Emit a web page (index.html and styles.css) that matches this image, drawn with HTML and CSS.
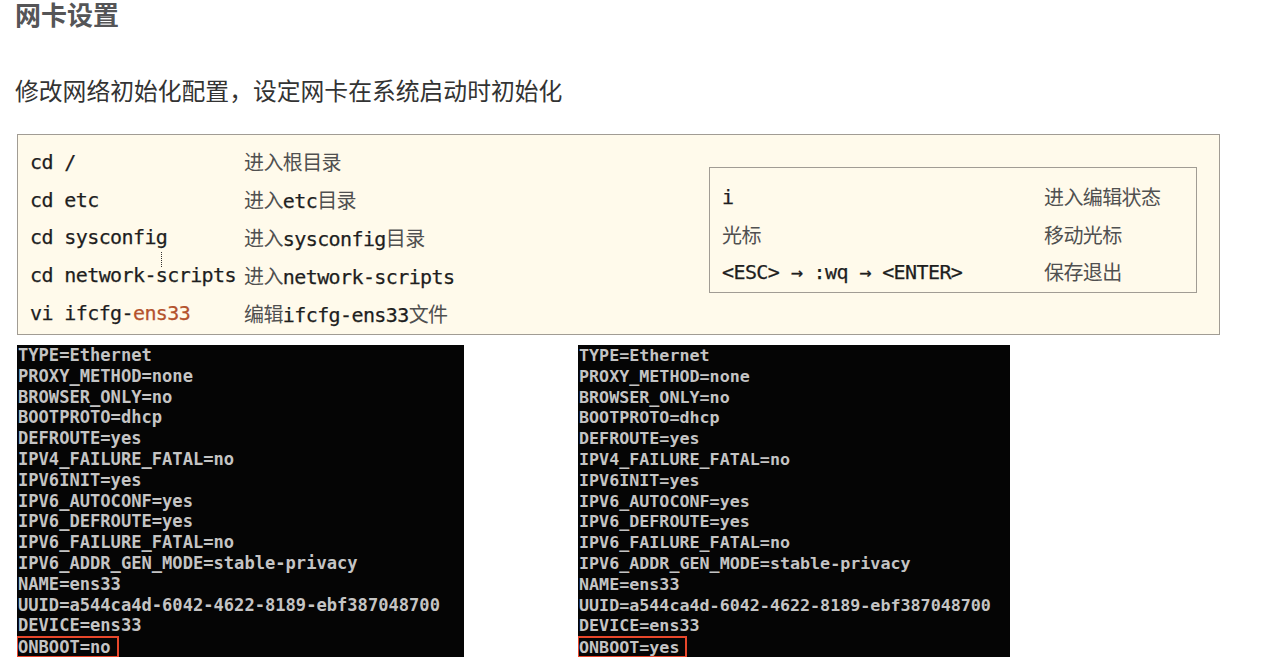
FILE: index.html
```html
<!DOCTYPE html>
<html lang="zh-CN">
<head>
<meta charset="UTF-8">
<meta name="viewport" content="width=device-width, initial-scale=1.0">
<title>网卡设置</title>
<link rel="stylesheet" href="styles.css">
</head>
<body>

<!-- 标题 -->
<h2 class="page-title">网卡设置</h2>
<p class="intro">修改网络初始化配置，设定网卡在系统启动时初始化</p>

<!-- 命令说明 -->
<div class="cmd-box">
    <div class="cmd-table">
        <span class="cmd">cd /</span><span class="desc">进入根目录</span>
        <span class="cmd">cd etc</span><span class="desc">进入<b>etc</b>目录</span>
        <span class="cmd cmd-mark">cd sysconfig<span class="cursor-dots"></span></span><span class="desc">进入<b>sysconfig</b>目录</span>
        <span class="cmd">cd network-scripts</span><span class="desc">进入<b>network-scripts</b></span>
        <span class="cmd">vi ifcfg-<span class="hl">ens33</span></span><span class="desc">编辑<b>ifcfg-ens33</b>文件</span>
    </div>

    <div class="vi-box">
        <span class="cmd">i</span><span class="desc">进入编辑状态</span>
        <span class="desc">光标</span><span class="desc">移动光标</span>
        <span class="cmd">&lt;ESC&gt; → :wq → &lt;ENTER&gt;</span><span class="desc">保存退出</span>
    </div>
</div>

<!-- 配置文件截图 -->
<div class="terms">
<pre class="term term-before">TYPE=Ethernet
PROXY_METHOD=none
BROWSER_ONLY=no
BOOTPROTO=dhcp
DEFROUTE=yes
IPV4_FAILURE_FATAL=no
IPV6INIT=yes
IPV6_AUTOCONF=yes
IPV6_DEFROUTE=yes
IPV6_FAILURE_FATAL=no
IPV6_ADDR_GEN_MODE=stable-privacy
NAME=ens33
UUID=a544ca4d-6042-4622-8189-ebf387048700
DEVICE=ens33
<span class="mark">ONBOOT=no</span></pre>

<pre class="term term-after">TYPE=Ethernet
PROXY_METHOD=none
BROWSER_ONLY=no
BOOTPROTO=dhcp
DEFROUTE=yes
IPV4_FAILURE_FATAL=no
IPV6INIT=yes
IPV6_AUTOCONF=yes
IPV6_DEFROUTE=yes
IPV6_FAILURE_FATAL=no
IPV6_ADDR_GEN_MODE=stable-privacy
NAME=ens33
UUID=a544ca4d-6042-4622-8189-ebf387048700
DEVICE=ens33
<span class="mark">ONBOOT=yes</span></pre>
</div>

</body>
</html>
```

FILE: styles.css
```css
body {
    margin: 0;
    background-color: #ffffff;
    font-family: "Noto Sans CJK SC", "Noto Sans", sans-serif;
    height: 665px;
    overflow: hidden;
}

.page-title {
    margin: 0;
    padding-left: 15px;
    font-size: 26px;
    line-height: 28px;
    font-weight: bold;
    color: #555557;
}

.intro {
    margin: 46px 0 0 0;
    padding-left: 15px;
    font-size: 23.8px;
    line-height: 32px;
    color: #333333;
}

/* Блок с командами */
.cmd-box {
    display: flex;
    align-items: flex-start;
    width: 1203px;
    height: 201px;
    box-sizing: border-box;
    margin: 28px 0 0 17px;
    padding: 8px 22px 2px 12px;
    background-color: #fffaeb;
    border: 1px solid #a19c94;
    font-family: "DejaVu Sans Mono", "Noto Sans CJK SC", monospace;
    font-size: 20px;
    letter-spacing: -0.6px;
}

.cmd-table {
    display: grid;
    grid-template-columns: 214px auto;
    grid-auto-rows: 37.8px;
    align-items: center;
}

.vi-box {
    display: grid;
    grid-template-columns: 322px auto;
    grid-auto-rows: 37.5px;
    align-items: center;
    width: 488px;
    height: 126px;
    box-sizing: border-box;
    margin: 24px 0 0 auto;
    padding: 10px 12px 2px 12px;
    border: 1px solid #a19c94;
}

.cmd {
    color: #1e1e1e;
    white-space: pre;
    -webkit-text-stroke: 0.25px #1e1e1e;
}

.desc {
    color: #505050;
    white-space: pre;
}

.desc b {
    font-weight: normal;
    color: #1e1e1e;
    -webkit-text-stroke: 0.25px #1e1e1e;
}

.hl {
    color: #b4522d;
    -webkit-text-stroke: 0.25px #b4522d;
}

.cmd-mark {
    position: relative;
}

.cursor-dots {
    position: absolute;
    left: 131px;
    top: 27px;
    height: 15px;
    border-left: 1px dotted #333333;
}

/* Терминалы */
.terms {
    display: flex;
    gap: 114px;
    margin: 10px 0 0 17px;
}

.term {
    margin: 0;
    height: 312px;
    box-sizing: border-box;
    padding: 0 0 0 1px;
    background-color: #050505;
    color: #c4c4c4;
    font-family: "DejaVu Sans Mono", monospace;
    font-weight: bold;
    line-height: 20.8px;
    overflow: hidden;
}

.term-before {
    width: 447px;
    font-size: 17.1px;
}

.term-after {
    width: 432px;
    font-size: 16.7px;
}

.mark {
    display: inline-block;
    margin-left: -2px;
    padding-right: 6px;
    line-height: 18px;
    vertical-align: 2px;
    border: 2px solid #e8472b;
}
```
